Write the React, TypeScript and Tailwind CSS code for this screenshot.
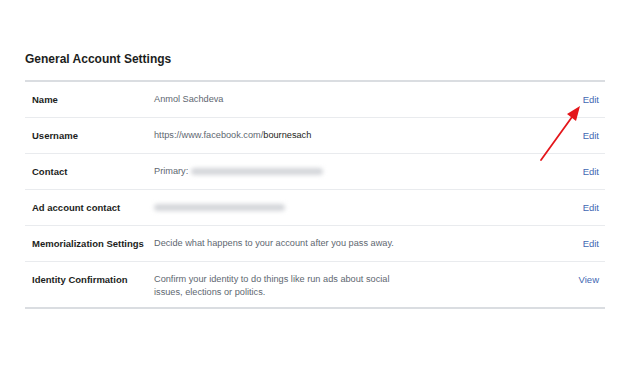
const rows = [
  { label: 'Name', value: <span>Anmol Sachdeva</span>, action: 'Edit' },
  {
    label: 'Username',
    value: (
      <span>
        https://www.facebook.com/<span className="text-[#1c1e21]">bournesach</span>
      </span>
    ),
    action: 'Edit',
  },
  {
    label: 'Contact',
    value: (
      <span className="flex items-center">
        Primary:
        <span className="ml-[3px] inline-block h-[7px] w-[132px] rounded-full bg-[#d4d6da] blur-[2px]" />
      </span>
    ),
    action: 'Edit',
  },
  {
    label: 'Ad account contact',
    value: <span className="block h-[7px] w-[131px] rounded-full bg-[#d4d6da] blur-[2px]" />,
    action: 'Edit',
  },
  { label: 'Memorialization Settings', value: <span>Decide what happens to your account after you pass away.</span>, action: 'Edit' },
  {
    label: 'Identity Confirmation',
    value: (
      <span className="block w-[250px]">
        Confirm your identity to do things like run ads about social issues, elections or politics.
      </span>
    ),
    action: 'View',
  },
];

export default function App() {
  return (
    <main className="relative h-[378px] w-[640px] bg-white font-['Liberation_Sans',Arial,sans-serif]">
      <div className="pl-[25px] pr-[35px] pt-[51px]">
        <h1 className="text-[12px] font-bold leading-[16px] text-[#1c1e21]">General Account Settings</h1>
        <div className="mt-[13px] border-t-2 border-b-2 border-[#dadde1]">
          {rows.map((r, i) => {
            const last = i === rows.length - 1;
            return (
              <div
                key={r.label}
                className={
                  last
                    ? 'flex h-[45px] items-start pl-[7px] pr-[6px] pt-[11px]'
                    : 'flex h-[36px] items-center border-b border-[#e9ebee] pl-[7px] pr-[6px]'
                }
              >
                <div className="w-[122px] shrink-0 text-[9.5px] font-bold leading-[13px] text-[#1c1e21]">{r.label}</div>
                <div className="flex-1 text-[9.2px] leading-[13px] text-[#606770]">{r.value}</div>
                <div className="w-[40px] text-right text-[9.5px] leading-[13px] text-[#4267b2]">{r.action}</div>
              </div>
            );
          })}
        </div>
      </div>
      <svg className="absolute left-0 top-0" width="640" height="378" viewBox="0 0 640 378">
        <line x1="541" y1="160" x2="572" y2="117" stroke="#e4161b" strokeWidth="1.8" strokeLinecap="round" />
        <polygon points="580,106 567,114 576,121" fill="#e4161b" />
      </svg>
    </main>
  );
}
